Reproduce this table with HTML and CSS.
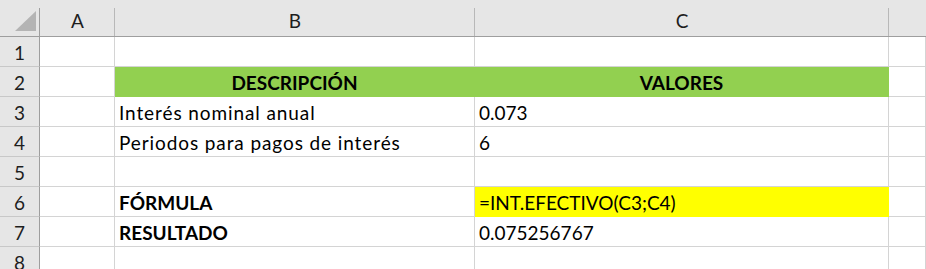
FILE: index.html
```html
<!DOCTYPE html>
<html lang="es">
<head>
  <meta charset="UTF-8" />
  <title>INT.EFECTIVO</title>
  <link rel="stylesheet" href="styles.css">
</head>
<body>
  <div class="sheet">
    <!-- column headers -->
    <div class="hd corner">
      <svg width="22" height="21" viewBox="0 0 22 21"><polygon points="21,0 21,20 0,20" fill="#b4b4b4"/></svg>
    </div>
    <div class="hd col">A</div>
    <div class="hd col">B</div>
    <div class="hd col">C</div>
    <div class="hd col last"></div>

    <!-- row 1 -->
    <div class="hd row">1</div>
    <div class="cell"></div><div class="cell"></div><div class="cell"></div><div class="cell"></div>

    <!-- row 2 -->
    <div class="hd row">2</div>
    <div class="cell"></div>
    <div class="cell green bold center">DESCRIPCIÓN</div>
    <div class="cell green bold center">VALORES</div>
    <div class="cell"></div>

    <!-- row 3 -->
    <div class="hd row">3</div>
    <div class="cell"></div>
    <div class="cell label">Interés nominal anual</div>
    <div class="cell">0.073</div>
    <div class="cell"></div>

    <!-- row 4 -->
    <div class="hd row">4</div>
    <div class="cell"></div>
    <div class="cell label">Periodos para pagos de interés</div>
    <div class="cell">6</div>
    <div class="cell"></div>

    <!-- row 5 -->
    <div class="hd row">5</div>
    <div class="cell"></div><div class="cell"></div><div class="cell"></div><div class="cell"></div>

    <!-- row 6 -->
    <div class="hd row">6</div>
    <div class="cell"></div>
    <div class="cell bold">FÓRMULA</div>
    <div class="cell yellow">=INT.EFECTIVO(C3;C4)</div>
    <div class="cell"></div>

    <!-- row 7 -->
    <div class="hd row">7</div>
    <div class="cell"></div>
    <div class="cell bold">RESULTADO</div>
    <div class="cell">0.075256767</div>
    <div class="cell"></div>

    <!-- row 8 -->
    <div class="hd row">8</div>
    <div class="cell"></div><div class="cell"></div><div class="cell"></div><div class="cell"></div>
  </div>
</body>
</html>
```

FILE: styles.css
```css
body {
  margin: 0;
  background: #ffffff;
  font-family: Lato, "Open Sans", sans-serif;
  font-size: 19px;
  color: #000000;
  overflow: hidden;
}
.sheet {
  display: grid;
  grid-template-columns: 40px 75px 360px 414px 1fr;
  grid-template-rows: 37px repeat(8, 30px);
}
.hd {
  background-color: #e6e6e6;
  color: #1e1e1e;
  display: flex;
  align-items: flex-end;
  justify-content: center;
  box-sizing: border-box;
}
.corner {
  border-bottom: 1px solid #9e9e9e;
  justify-content: flex-start;
  padding: 0 0 4px 15px;
  background-image: linear-gradient(#9e9e9e, #9e9e9e);
  background-size: 1px 28px;
  background-position: right bottom;
  background-repeat: no-repeat;
}
.col {
  border-bottom: 1px solid #9e9e9e;
  padding-bottom: 4px;
  background-image: linear-gradient(#b8b8b8, #b8b8b8);
  background-size: 1px 28px;
  background-position: right bottom;
  background-repeat: no-repeat;
}
.col.last {
  background-image: none;
}
.row {
  border-right: 1px solid #9e9e9e;
  border-bottom: 1px solid #c8c8c8;
  padding-bottom: 2px;
}
.cell {
  border-right: 1px solid #d4d4d4;
  border-bottom: 1px solid #d4d4d4;
  display: flex;
  align-items: flex-end;
  padding: 0 0 2px 4px;
  white-space: nowrap;
  box-sizing: border-box;
}
.label {
  letter-spacing: 0.9px;
}
.bold {
  font-weight: 700;
}
.center {
  justify-content: center;
  padding-left: 0;
}
.green {
  background-color: #92d050;
  border-color: #92d050;
}
.yellow {
  background-color: #ffff00;
  border-color: #ffff00;
}
```
